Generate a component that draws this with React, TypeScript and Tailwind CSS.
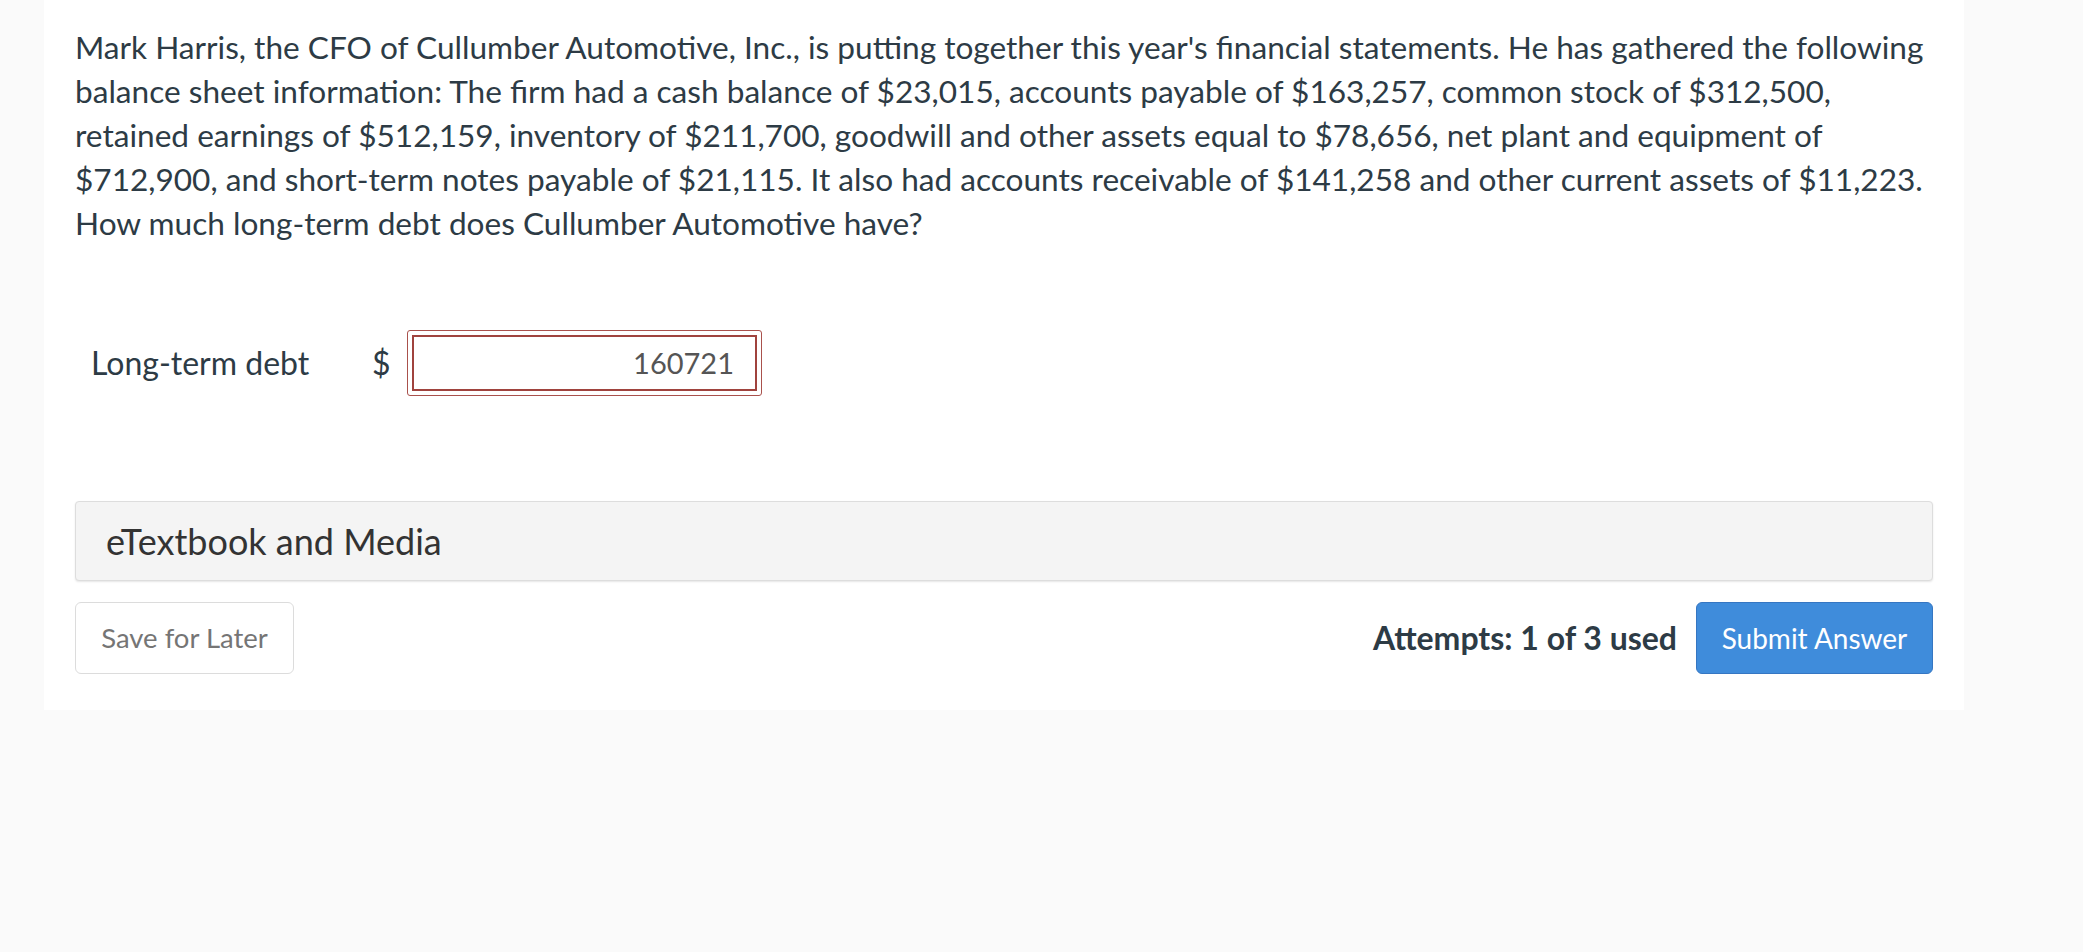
import React from "react";

export default function App() {
  return (
    <div className="min-h-screen bg-[#fafafa] font-['Lato','Liberation_Sans',sans-serif]">
      <div className="ml-[44px] w-[1920px] bg-white px-[31px] pt-[25px] pb-[36px]">
        <p className="text-[31.6px] leading-[44px] text-[#2d3b45]">
          Mark Harris, the CFO of Cullumber Automotive, Inc., is putting together this year's financial statements. He has gathered the following balance sheet information: The firm had a cash balance of $23,015, accounts payable of $163,257, common stock of $312,500, retained earnings of $512,159, inventory of $211,700, goodwill and other assets equal to $78,656, net plant and equipment of $712,900, and short-term notes payable of $21,115. It also had accounts receivable of $141,258 and other current assets of $11,223. How much long-term debt does Cullumber Automotive have?
        </p>

        <div className="mt-[85px] flex items-center pl-[16px]">
          <span className="w-[281px] text-[32px] text-[#2d3b45]">Long-term debt</span>
          <span className="w-[35px] text-[32px] text-[#2d3b45]">$</span>
          <div className="w-[355px] h-[66px] rounded-[3px] border-[1.5px] border-[#a9514c] p-[4px]">
            <div className="h-full border-2 border-[#a0433e] flex items-center justify-end pr-[21px] text-[29px] text-[#555555]">
              160721
            </div>
          </div>
        </div>

        <div className="mt-[105px] h-[80px] rounded-[4px] border border-[#dddddd] bg-[#f4f4f4] shadow-[0_1px_2px_rgba(0,0,0,0.1)] flex items-center pl-[30px] text-[36px] text-[#333333]">
          eTextbook and Media
        </div>

        <div className="mt-[21px] flex items-center justify-between">
          <button className="h-[72px] w-[219px] rounded-[6px] border border-[#dcdcdc] bg-white text-[27.5px] text-[#757575] flex items-center justify-center">
            Save for Later
          </button>
          <div className="flex items-center">
            <span className="text-[32px] font-bold text-[#2d3b45] mr-[19px]">Attempts: 1 of 3 used</span>
            <button className="h-[72px] w-[237px] rounded-[6px] border border-[#3576c2] bg-[#3f8cdb] text-[28px] text-white flex items-center justify-center">
              Submit Answer
            </button>
          </div>
        </div>
      </div>
    </div>
  );
}
